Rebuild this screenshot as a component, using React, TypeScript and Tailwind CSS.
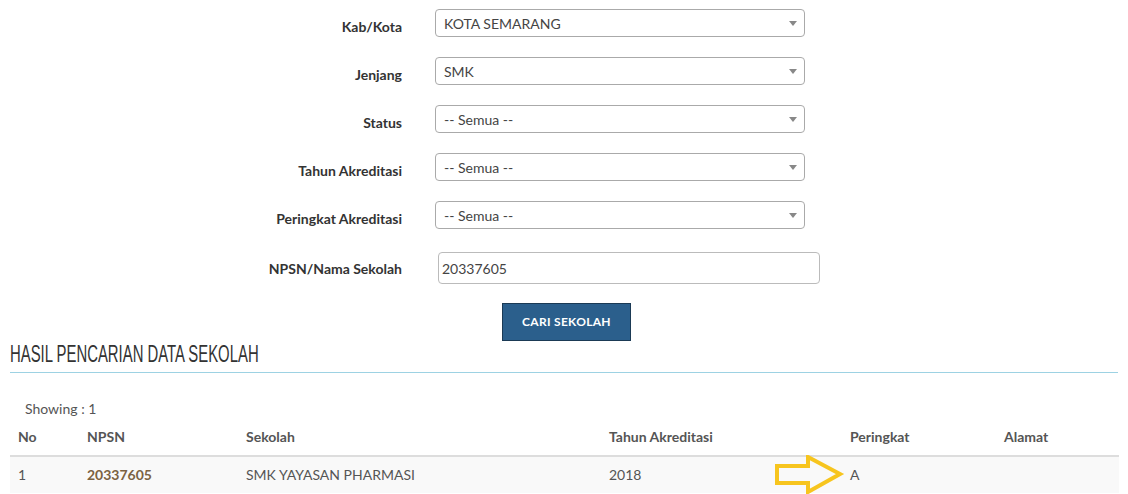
const filters = [
  { label: "Kab/Kota", value: "KOTA SEMARANG" },
  { label: "Jenjang", value: "SMK" },
  { label: "Status", value: "-- Semua --" },
  { label: "Tahun Akreditasi", value: "-- Semua --" },
  { label: "Peringkat Akreditasi", value: "-- Semua --" },
];

function SelectBox({ value }: { value: string }) {
  return (
    <div className="relative flex h-[28px] w-[370px] items-center rounded-[4px] border border-[#aaa] bg-white pl-[8px] text-[14px] text-[#444]">
      {value}
      <span className="absolute right-[7px] top-[11px] h-0 w-0 border-x-[4px] border-t-[5px] border-x-transparent border-t-[#888]" />
    </div>
  );
}

export default function App() {
  return (
    <div className="h-[494px] w-[1128px] overflow-hidden bg-white text-[14px] text-[#555]" style={{ fontFamily: "Lato, 'Open Sans', sans-serif" }}>
      {/* filter form */}
      <div className="pt-[9px]">
        {filters.map((f) => (
          <div key={f.label} className="mb-[20px] flex h-[28px] items-start">
            <div className="w-[402px] pt-[8px] text-right font-bold leading-[20px] text-[#333]">{f.label}</div>
            <div className="ml-[33px]">
              <SelectBox value={f.value} />
            </div>
          </div>
        ))}
        <div className="mt-[23px] flex items-start">
          <div className="w-[402px] pt-[7px] text-right font-bold leading-[20px] text-[#333]">NPSN/Nama Sekolah</div>
          <div className="ml-[36px] flex h-[32px] w-[382px] items-center rounded-[4px] border border-[#bbb] pl-[3px] text-[14px] text-[#444]">
            20337605
          </div>
        </div>
        <div className="mt-[19px] flex pl-[502px]">
          <button className="h-[38px] w-[129px] border border-[#1b3a55] bg-[#2b5f8c] text-[12px] font-bold tracking-[0.3px] text-white">
            CARI SEKOLAH
          </button>
        </div>
      </div>

      {/* results */}
      <div className="px-[10px]">
        <div className="-mt-[1px] h-[33px] border-b border-[#9dd2e3]">
          <h2
            className="inline-block origin-left scale-x-[0.62] whitespace-nowrap text-[24px] leading-[28px] text-[#333]"
            style={{ fontFamily: "'Liberation Sans', Arial, sans-serif" }}
          >
            HASIL PENCARIAN DATA SEKOLAH
          </h2>
        </div>
        <div className="mt-[26px] pl-[15px] leading-[20px]">Showing : 1</div>
        <table className="w-[1109px] border-collapse text-left">
          <thead>
            <tr className="border-b-2 border-[#ddd]">
              <th className="w-[69px] px-[8px] py-[8px] font-bold leading-[20px]">No</th>
              <th className="w-[159px] px-[8px] py-[8px] font-bold leading-[20px]">NPSN</th>
              <th className="w-[363px] px-[8px] py-[8px] font-bold leading-[20px]">Sekolah</th>
              <th className="w-[241px] px-[8px] py-[8px] font-bold leading-[20px]">Tahun Akreditasi</th>
              <th className="w-[154px] px-[8px] py-[8px] font-bold leading-[20px]">Peringkat</th>
              <th className="px-[8px] py-[8px] font-bold leading-[20px]">Alamat</th>
            </tr>
          </thead>
          <tbody>
            <tr className="bg-[#f9f9f9]">
              <td className="px-[8px] py-[8px] leading-[20px]">1</td>
              <td className="px-[8px] py-[8px] font-bold leading-[20px] text-[#7b6242]">20337605</td>
              <td className="px-[8px] py-[8px] leading-[20px]">SMK YAYASAN PHARMASI</td>
              <td className="px-[8px] py-[8px] leading-[20px]">2018</td>
              <td className="relative px-[8px] py-[8px] leading-[20px]">
                <svg className="absolute -left-[67px] -top-[2px]" width="70" height="40" viewBox="0 0 70 40">
                  <polygon
                    points="2,11 33,11 33,2 65,19 33,37 33,28 2,28"
                    fill="none"
                    stroke="#f7c51e"
                    strokeWidth="4"
                    strokeLinejoin="miter"
                  />
                </svg>
                A
              </td>
              <td className="px-[8px] py-[8px] leading-[20px]"></td>
            </tr>
          </tbody>
        </table>
      </div>
    </div>
  );
}
